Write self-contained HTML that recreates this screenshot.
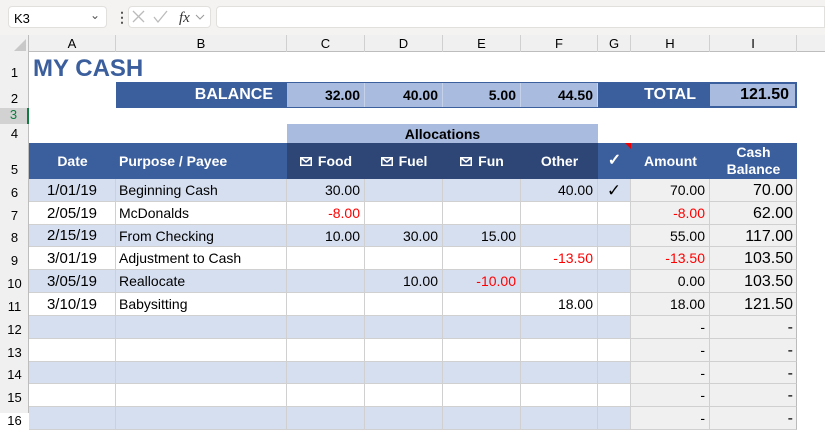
<!DOCTYPE html>
<html><head><meta charset="utf-8"><style>
body{margin:0;width:825px;height:413px;overflow:hidden;background:#fff;font-family:"Liberation Sans",Arial,sans-serif;position:relative}
.a{position:absolute;box-sizing:border-box}
.c{position:absolute;box-sizing:border-box;font-size:14px;line-height:1;display:flex;align-items:center;white-space:nowrap;overflow:hidden;color:#000}
.r{justify-content:flex-end;padding-right:4px}
.l{padding-left:3px}
.m{justify-content:center}
.w{color:#fff;font-weight:bold}
.red{color:#f00}
</style></head><body>
<div class="a" style="left:0;top:0;width:825px;height:35px;background:#f5f3f1"></div>
<div class="a" style="left:8px;top:6px;width:99px;height:22px;background:#fff;border:1px solid #e2e0dd;border-radius:4px;font-size:13px;padding:4px 0 0 5px">K3<span style="position:absolute;right:6px;top:1px;color:#555;font-size:12px">⌄</span></div>
<div class="a" style="left:115px;top:9px;font-size:14px;color:#555;font-weight:bold">⋮</div>
<div class="a" style="left:128px;top:6px;width:83px;height:22px;background:#fff;border:1px solid #e2e0dd;border-radius:4px"></div>
<svg class="a" style="left:128px;top:6px" width="83" height="22"><path d="M5 5l11 11M16 5L5 16" stroke="#bbb" stroke-width="1.3" fill="none"/><path d="M26 11l4 5 9-11" stroke="#bbb" stroke-width="1.3" fill="none"/><text x="51" y="16" font-family="Liberation Serif" font-style="italic" font-size="15" fill="#333">fx</text><path d="M68 9l4 4 4-4" stroke="#999" fill="none"/></svg>
<div class="a" style="left:216px;top:6px;width:609px;height:22px;background:#fff;border:1px solid #e2e0dd;border-radius:4px 0 0 4px"></div>
<div class="a" style="left:0;top:35px;width:825px;height:17px;background:#f0f0f0;border-bottom:1px solid #bdbdbd"></div>
<div class="a" style="left:0;top:35px;width:29px;height:378px;background:#f0f0f0;border-right:1px solid #bdbdbd"></div>
<svg class="a" style="left:14px;top:39px" width="12" height="12"><path d="M12 0V12H0z" fill="#c8c8c8"/></svg>
<div id="g"></div>
<script>
var X=[29,116,287,365,443,521,598,631,710,797,825];
var Y=[52,82,108,124,143,179,202,225,247,270,293,316,339,362,384,407,430];
var h='';
function cell(x0,x1,y0,y1,st,cls,t){h+='<div class="c '+(cls||'')+'" style="left:'+x0+'px;top:'+y0+'px;width:'+(x1-x0)+'px;height:'+(y1-y0)+'px;'+(st||'')+'">'+(t||'')+'</div>';}
var L='ABCDEFGHI';
for(var i=0;i<9;i++)cell(X[i],X[i+1],35,52,'border-right:1px solid #d0d0d0;font-size:13px','m',L[i]);
for(var r=0;r<16;r++)cell(0,29,Y[r],Y[r+1],'font-size:13px;align-items:flex-end;padding-bottom:3px'+(r==2?';background:#d2d2d2;color:#107c41;border-right:2px solid #107c41':''),'m',r+1);
cell(29,287,52,82,'font-size:24px;font-weight:bold;color:#3b5e9c;padding-left:4px;align-items:flex-end;padding-bottom:1px','', 'MY CASH');
cell(116,287,82,108,'background:#3b5e9c;font-size:16px;padding-right:14px','r w','BALANCE');
var bv=['32.00','40.00','5.00','44.50'];
for(i=0;i<4;i++)cell(X[2+i],X[3+i],82,108,'background:#a9bcdf;font-weight:bold;border-right:1px solid #c5d2ea','r',bv[i]);
cell(598,710,82,108,'background:#3b5e9c;font-size:16px;padding-right:14px','r w','TOTAL');
cell(710,797,82,108,'background:#a9bcdf;font-size:16px;font-weight:bold;padding-right:6px;border:2px solid #3b5e9c;border-left:0','r','121.50');
h+='<div class="a" style="left:116px;top:82px;width:681px;height:26px;border:1px solid #3b5e9c"></div>';
cell(287,598,124,143,'background:#a9bcdf','m w','<span style="color:#000">Allocations</span>');
var env='<svg width="12" height="9" style="margin-right:6px"><rect x="0.75" y="0.75" width="10.5" height="7.5" fill="none" stroke="#fff" stroke-width="1.5"/><path d="M1 1l5 4 5-4" stroke="#fff" stroke-width="1.5" fill="none"/></svg>';
cell(29,116,143,179,'background:#3b5e9c','m w','Date');
cell(116,287,143,179,'background:#3b5e9c','l w','Purpose / Payee');
var hd=['Food','Fuel','Fun'];
for(i=0;i<3;i++)cell(X[2+i],X[3+i],143,179,'background:#2e4676','m w',env+hd[i]);
cell(521,598,143,179,'background:#2e4676','m w','Other');
cell(598,631,143,179,'background:#3b5e9c;font-size:16px','m w','✓');
h+='<div class="a" style="left:625px;top:143px;width:0;height:0;border-left:6px solid transparent;border-top:6px solid #e00"></div>';
cell(631,710,143,179,'background:#3b5e9c','m w','Amount');
cell(710,797,143,179,'background:#3b5e9c;text-align:center;line-height:17px;white-space:normal','m w','Cash<br>Balance');
var D=[['1/01/19','Beginning Cash','30.00','','','40.00','✓','70.00','70.00'],
['2/05/19','McDonalds','-8.00','','','','','-8.00','62.00'],
['2/15/19','From Checking','10.00','30.00','15.00','','','55.00','117.00'],
['3/01/19','Adjustment to Cash','','','','-13.50','','-13.50','103.50'],
['3/05/19','Reallocate','','10.00','-10.00','','','0.00','103.50'],
['3/10/19','Babysitting','','','','18.00','','18.00','121.50']];
for(r=0;r<11;r++){var y0=Y[5+r],y1=Y[6+r];var bg=(r%2==0)?'#d6dff0':'#fff';var d=D[r]||['','','','','','','','-','-'];
for(i=0;i<9;i++){var b=(i>=7)?'#f0f0f0':bg;var st='background:'+b+';border-right:1px solid #d0d0d0;border-bottom:1px solid #d0d0d0';var t=d[i];var cls=i==0?'m':(i==1?'l':(i==6?'m':'r'));
if(i==8)st+=';font-size:16px;padding-right:3px;padding-top:2px';if(i==6)st+=';font-size:17px';if(i==8)st+=';border-right:1px solid #bbb';
if(t&&t[0]=='-'&&t.length>1)cls+=' red';if(i==0)st+=';font-size:15px';
cell(X[i],X[i+1],y0,y1,st,cls,t);}}
document.getElementById('g').innerHTML=h;
</script>
</body></html>
